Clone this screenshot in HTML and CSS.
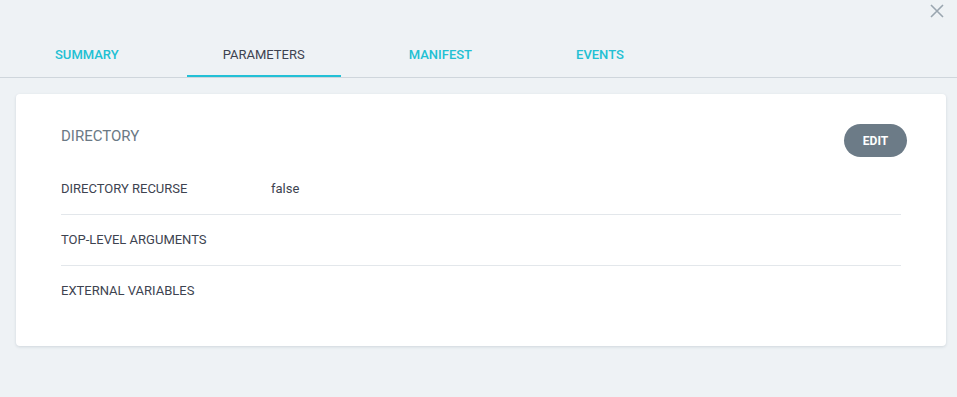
FILE: index.html
```html
<!DOCTYPE html>
<html>
<head>
<meta charset="utf-8">
<link rel="stylesheet" href="styles.css">
</head>
<body>
<div class="page">
  <div class="topbar">
    <button class="close" aria-label="Close">
      <svg width="14" height="14" viewBox="0 0 14 14"><path d="M1 1 L13 13 M13 1 L1 13" stroke="#9aa6b0" stroke-width="1.6" fill="none"/></svg>
    </button>
  </div>
  <nav class="tabs">
    <a class="tab">SUMMARY</a>
    <a class="tab active">PARAMETERS</a>
    <a class="tab">MANIFEST</a>
    <a class="tab">EVENTS</a>
  </nav>
  <section class="card">
    <div class="card-head">
      <h2 class="title">DIRECTORY</h2>
      <button class="edit">EDIT</button>
    </div>
    <div class="row"><span class="label">DIRECTORY RECURSE</span><span class="value">false</span></div>
    <div class="row"><span class="label">TOP-LEVEL ARGUMENTS</span><span class="value"></span></div>
    <div class="row last"><span class="label">EXTERNAL VARIABLES</span><span class="value"></span></div>
  </section>
</div>
</body>
</html>
```
FILE: styles.css
```css
* { box-sizing: border-box; }
html, body { margin: 0; padding: 0; }
body {
  background: #eef2f5;
  font-family: Roboto, "Liberation Sans", Arial, sans-serif;
  width: 957px;
  height: 397px;
  overflow: hidden;
}
.topbar {
  height: 30px;
  display: flex;
  justify-content: flex-end;
  padding: 4px 13px 0 0;
}
.close {
  border: 0;
  background: transparent;
  padding: 0;
  width: 14px;
  height: 14px;
  cursor: pointer;
}
.close svg { display: block; }
.tabs {
  display: flex;
  gap: 32px;
  padding-left: 19px;
  border-bottom: 1px solid #cfd6dc;
  height: 48px;
}
.tab {
  padding: 0 36px;
  font-size: 13px;
  font-weight: 500;
  color: #22c0d3;
  line-height: 50px;
  height: 47px;
  border-bottom: 2px solid transparent;
  overflow: hidden;
}
.tab.active {
  color: #3d4250;
  border-bottom-color: #22c0d6;
  font-weight: 400;
}
.card {
  margin: 16px 11px 0 16px;
  background: #fff;
  border-radius: 4px;
  box-shadow: 0 1px 3px rgba(40, 60, 80, 0.15);
  padding: 30px 45px 30px 45px;
}
.card-head {
  display: flex;
  justify-content: space-between;
  align-items: flex-start;
  margin-right: -6px;
  height: 40px;
}
.title {
  margin: 0;
  font-size: 15px;
  font-weight: 400;
  line-height: 24px;
  color: #6b7985;
}
.edit {
  border: 0;
  background: #6c7b87;
  color: #fff;
  font-family: inherit;
  font-size: 12px;
  font-weight: 700;
  height: 33px;
  width: 63px;
  border-radius: 17px;
  padding: 0;
}
.row {
  display: flex;
  align-items: center;
  height: 51px;
  padding-bottom: 2px;
  border-bottom: 1px solid #e3e7eb;
  font-size: 13px;
  color: #3d4350;
}
.row.last { border-bottom: 0; height: 50px; padding-bottom: 1px; }
.label { width: 210px; }
```
